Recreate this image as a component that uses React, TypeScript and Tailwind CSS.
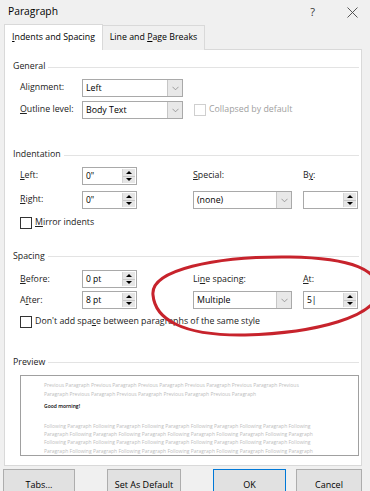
import React from 'react';

const font = { fontFamily: '"Open Sans", "Noto Sans", Arial, sans-serif' };

function Spin() {
  return (
    <div className="flex flex-col w-[13px] h-full border-l border-[#d4d4d4] bg-[#e6e6e6]">
      <div className="flex-1 flex items-center justify-center border-b border-[#c8c8c8]">
        <div className="w-0 h-0 border-l-[3px] border-r-[3px] border-b-[3px] border-l-transparent border-r-transparent border-b-black" />
      </div>
      <div className="flex-1 flex items-center justify-center">
        <div className="w-0 h-0 border-l-[3px] border-r-[3px] border-t-[3px] border-l-transparent border-r-transparent border-t-black" />
      </div>
    </div>
  );
}

function SpinBox({ value, width = 'w-[55px]' }: { value: string; width?: string }) {
  return (
    <div className={`${width} h-[18px] flex border border-[#a9a9a9] bg-white p-[1px]`}>
      <div className="flex-1 pl-[2px] text-[8.5px] leading-[14px] text-black">{value}</div>
      <Spin />
    </div>
  );
}

function Chevron() {
  return (
    <svg width="7" height="5" viewBox="0 0 7 5">
      <path d="M0.5 0.8 L3.5 3.8 L6.5 0.8" fill="none" stroke="#8a8a8a" strokeWidth="0.8" />
    </svg>
  );
}

function Select({ value, width }: { value: string; width: string }) {
  return (
    <div className={`${width} h-[18px] flex border border-[#a9a9a9] bg-white`}>
      <div className="flex-1 pl-[3px] text-[8.8px] leading-[16px] text-black">{value}</div>
      <div className="w-[15px] flex items-center justify-center bg-[#e8e8e8] border-l border-[#c6c6c6]">
        <Chevron />
      </div>
    </div>
  );
}

function Check({ disabled }: { disabled?: boolean }) {
  return (
    <div
      className={`w-[12px] h-[12px] bg-white border ${disabled ? 'border-[#cfcfcf]' : 'border-[#333333]'}`}
    />
  );
}

function Section({ title }: { title: string }) {
  return (
    <div className="flex items-center h-[12px] pl-[8px] pr-[2px]">
      <span className="text-[8.8px] text-[#222] mr-[3px]">{title}</span>
      <div className="flex-1 h-px bg-[#e3e3e3]" />
    </div>
  );
}

function Label({ children, className = '' }: { children: React.ReactNode; className?: string }) {
  return <span className={`text-[8.8px] text-[#222] ${className}`}>{children}</span>;
}

const prev1 =
  'Previous Paragraph Previous Paragraph Previous Paragraph Previous Paragraph Previous Paragraph Previous';
const prev2 = 'Paragraph Previous Paragraph Previous Paragraph Previous Paragraph Previous Paragraph';
const fol1 =
  'Following Paragraph Following Paragraph Following Paragraph Following Paragraph Following Paragraph Following';
const fol2 =
  'Paragraph Following Paragraph Following Paragraph Following Paragraph Following Paragraph Following Paragraph';

export default function App() {
  return (
    <div className="relative w-[370px] h-[491px] overflow-hidden bg-[#f0f0f0]" style={font}>
      {/* Title bar */}
      <div className="h-[24px] flex items-center pl-[8px]">
        <span className="text-[10.3px] text-black flex-1">Paragraph</span>
        <span className="text-[11px] text-[#333] mr-[32px]">?</span>
        <svg width="11" height="11" viewBox="0 0 11 11" className="mr-[12px]">
          <path d="M0.5 0.5 L10.5 10.5 M10.5 0.5 L0.5 10.5" stroke="#444" strokeWidth="0.9" />
        </svg>
      </div>

      {/* Tabs */}
      <div className="flex ml-[4px] h-[26px] items-end">
        <div className="h-[26px] w-[99px] bg-white border border-b-0 border-[#d9d9d9] flex items-center justify-center text-[8.8px] text-black relative z-10">
          <span>
            <u>I</u>ndents and Spacing
          </span>
        </div>
        <div className="h-[25px] w-[102px] bg-[#f0f0f0] border border-l-0 border-b-0 border-[#d9d9d9] flex items-center justify-center text-[8.8px] text-black">
          <span>
            Line and <u>P</u>age Breaks
          </span>
        </div>
      </div>

      {/* Panel */}
      <div className="ml-[4px] w-[358px] h-[417px] bg-white border border-[#d9d9d9] -mt-px pt-[11px]">
        <Section title="General" />
        <div className="mt-[6px] flex items-center pl-[15px]">
          <Label className="w-[62px]">Alignment:</Label>
          <Select value="Left" width="w-[101px]" />
        </div>
        <div className="mt-[4px] flex items-center pl-[15px]">
          <Label className="w-[62px]">
            <u>O</u>utline level:
          </Label>
          <Select value="Body Text" width="w-[101px]" />
          <div className="ml-[11px] flex items-center">
            <Check disabled />
            <span className="ml-[3px] text-[8.8px] text-[#a0a0a0]">Collapsed by default</span>
          </div>
        </div>

        <div className="mt-[30px]">
          <Section title="Indentation" />
        </div>
        <div className="mt-[6px] flex items-center pl-[15px] h-[18px]">
          <Label className="w-[62px]">
            <u>L</u>eft:
          </Label>
          <SpinBox value={'0"'} />
          <Label className="ml-[56px] w-[110px]">
            <u>S</u>pecial:
          </Label>
          <Label>
            B<u>y</u>:
          </Label>
        </div>
        <div className="mt-[6px] flex items-center pl-[15px] h-[18px]">
          <Label className="w-[62px]">
            <u>R</u>ight:
          </Label>
          <SpinBox value={'0"'} />
          <div className="ml-[56px]">
            <Select value="(none)" width="w-[99px]" />
          </div>
          <div className="ml-[11px]">
            <SpinBox value="" />
          </div>
        </div>
        <div className="mt-[7px] flex items-center pl-[15px]">
          <Check />
          <span className="ml-[3px] text-[8.8px] text-[#222]">
            <u>M</u>irror indents
          </span>
        </div>

        <div className="mt-[21px]">
          <Section title="Spacing" />
        </div>
        <div className="mt-[8px] flex items-center pl-[15px] h-[18px]">
          <Label className="w-[62px]">
            <u>B</u>efore:
          </Label>
          <SpinBox value="0 pt" />
          <Label className="ml-[56px] w-[110px]">
            Li<u>n</u>e spacing:
          </Label>
          <Label>
            <u>A</u>t:
          </Label>
        </div>
        <div className="mt-[3px] flex items-center pl-[15px] h-[18px]">
          <Label className="w-[62px]">
            A<u>f</u>ter:
          </Label>
          <SpinBox value="8 pt" />
          <div className="ml-[56px]">
            <Select value="Multiple" width="w-[99px]" />
          </div>
          <div className="ml-[11px]">
            <SpinBox value="5|" />
          </div>
        </div>
        <div className="mt-[6px] flex items-center pl-[15px]">
          <Check />
          <span className="ml-[3px] text-[8.8px] text-[#222]">
            Don't add spa<u>c</u>e between paragraphs of the same style
          </span>
        </div>

        <div className="mt-[28px]">
          <Section title="Preview" />
        </div>
        <div className="mt-[7px] ml-[15px] w-[339px] h-[81px] border border-[#a0a0a0] overflow-hidden pl-[23px] pt-[5px] text-[5px] leading-[8.4px] whitespace-nowrap">
          <div className="text-[#bdbdbd]">{prev1}</div>
          <div className="text-[#bdbdbd]">{prev2}</div>
          <div className="mt-[4px] text-black font-semibold">Good morning!</div>
          <div className="mt-[11px] text-[#bdbdbd]">{fol1}</div>
          <div className="text-[#bdbdbd]">{fol2}</div>
          <div className="text-[#bdbdbd]">{fol1}</div>
          <div className="text-[#bdbdbd]">{fol2}</div>
        </div>
      </div>

      {/* Buttons */}
      <div className="mt-[3px] flex text-[9px] text-black">
        <div className="ml-[3px] w-[72px] h-[26px] bg-[#e1e1e1] border border-[#adadad] flex items-start justify-center pt-[8px]">
          Tabs...
        </div>
        <div className="ml-[32px] w-[74px] h-[26px] bg-[#e1e1e1] border border-[#adadad] flex items-start justify-center pt-[8px]">
          Set As Default
        </div>
        <div className="ml-[32px] w-[73px] h-[26px] bg-[#e1e1e1] border border-[#0078d7] flex items-start justify-center pt-[8px]">
          OK
        </div>
        <div className="ml-[10px] w-[66px] h-[26px] bg-[#e1e1e1] border border-[#adadad] flex items-start justify-center pt-[8px]">
          Cancel
        </div>
      </div>

      {/* Red annotation ellipse */}
      <svg className="absolute inset-0 pointer-events-none" width="370" height="491" viewBox="0 0 370 491">
        <path
          d="M153 295 C150 270 215 256 290 257 C352 258 380 270 378 292 C376 316 318 333 245 335 C180 336 155 318 153 295 Z"
          fill="none"
          stroke="#c7232c"
          strokeWidth="3"
        />
      </svg>
    </div>
  );
}
